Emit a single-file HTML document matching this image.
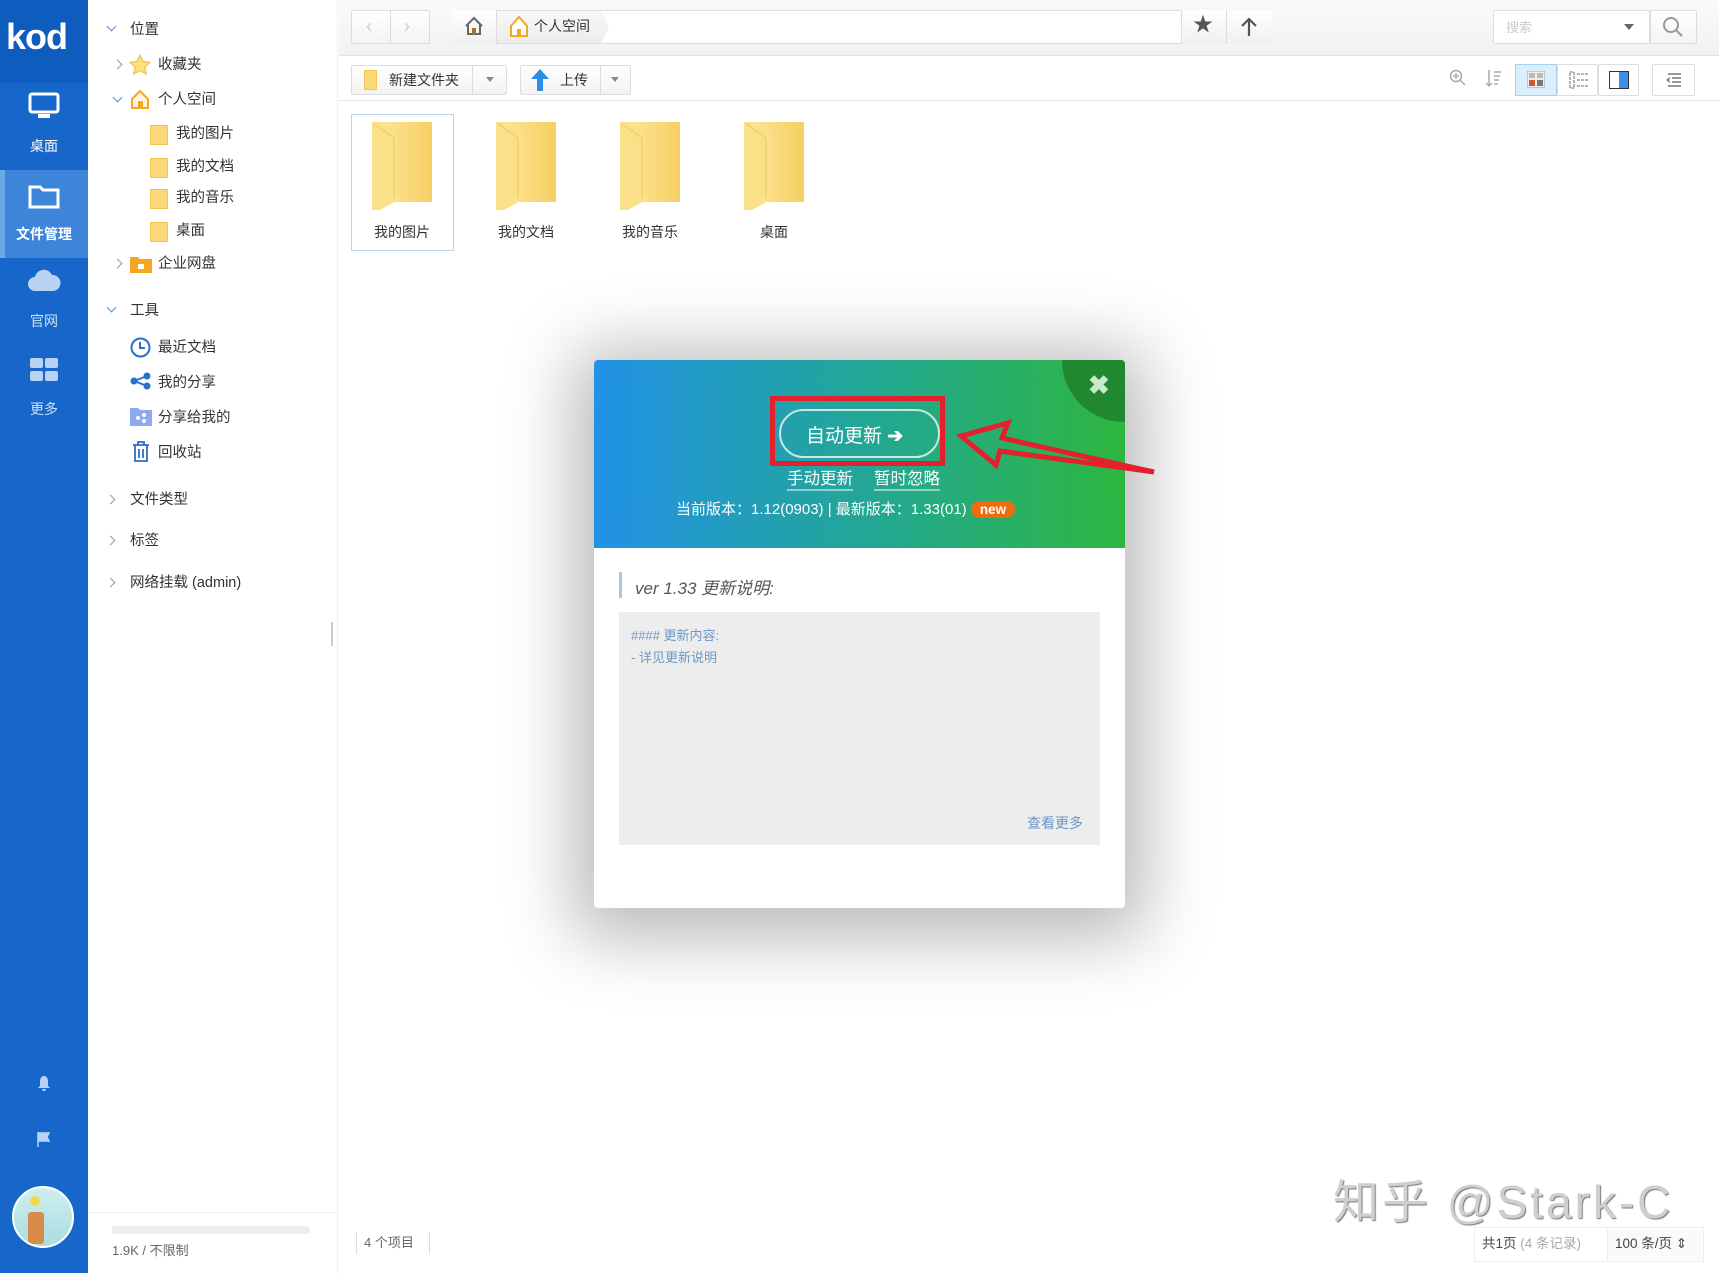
<!DOCTYPE html>
<html><head><meta charset="utf-8"><style>
*{margin:0;padding:0;box-sizing:border-box}
body{width:1719px;height:1273px;position:relative;overflow:hidden;background:#fff;font-family:"Liberation Sans","Noto Sans CJK SC",sans-serif;color:#333}
.a{position:absolute}
.side{left:0;top:0;width:88px;height:1273px;background:#1766c9}
.nav{left:0;width:88px;text-align:center;color:#fff;font-size:14px}
.t{position:absolute;font-size:14.5px;color:#333;white-space:nowrap;line-height:18px}
.chev{position:absolute;width:7px;height:7px;border-right:1.5px solid #999;border-bottom:1.5px solid #999}
.down{transform:rotate(45deg);border-color:#4a90d9}
.right{transform:rotate(-45deg)}
.fold{position:absolute;width:18px;height:20px;background:#fbd978;border:1px solid #f0c757}
.btn{position:absolute;border:1px solid #ddd;background:linear-gradient(#fff,#f3f3f3);border-radius:2px}
.bigf{position:absolute;width:62px;height:90px}
.lbl{position:absolute;font-size:14px;color:#333;width:100px;text-align:center}
</style></head><body>
<!-- sidebar -->
<div class="a side"></div>
<div class="a" style="left:0;top:0;width:88px;height:83px;background:#0f5cbf"></div>
<div class="a" style="left:6px;top:16px;color:#fff;font-size:36px;font-weight:bold;letter-spacing:-1px;font-family:'Liberation Sans',sans-serif">kod</div>
<div class="a" style="left:0;top:170px;width:88px;height:88px;background:#3c85d8"></div>
<div class="a" style="left:0;top:170px;width:5px;height:88px;background:#6ba6e6"></div>
<svg class="a" style="left:28px;top:92px" width="32" height="28" viewBox="0 0 32 28"><rect x="2" y="2" width="28" height="18" rx="2" fill="none" stroke="#fff" stroke-width="3"/><rect x="10" y="22" width="12" height="4" fill="#fff"/></svg>
<div class="a nav" style="top:136px">桌面</div>
<svg class="a" style="left:28px;top:183px" width="32" height="26" viewBox="0 0 32 26"><path d="M2 4h10l3 3h15v17H2z" fill="none" stroke="#fff" stroke-width="3"/></svg>
<div class="a nav" style="top:224px;font-weight:bold">文件管理</div>
<svg class="a" style="left:27px;top:268px" width="34" height="24" viewBox="0 0 34 24"><path d="M8 23a7 7 0 0 1 0-14 9 9 0 0 1 17-2 7 7 0 0 1 1 16z" fill="#b9d3f3"/></svg>
<div class="a nav" style="top:311px;color:#cfe0f7">官网</div>
<svg class="a" style="left:30px;top:358px" width="28" height="24"><rect x="0" y="0" width="13" height="10" rx="2" fill="#b9d3f3"/><rect x="15" y="0" width="13" height="10" rx="2" fill="#b9d3f3"/><rect x="0" y="13" width="13" height="10" rx="2" fill="#b9d3f3"/><rect x="15" y="13" width="13" height="10" rx="2" fill="#b9d3f3"/></svg>
<div class="a nav" style="top:399px;color:#cfe0f7">更多</div>
<svg class="a" style="left:37px;top:1075px" width="14" height="16"><path d="M7 1c-3 0-4 3-4 6v4l-2 2h12l-2-2V7c0-3-1-6-4-6zM5 14h4a2 2 0 0 1-4 0z" fill="#b9d3f3"/></svg>
<svg class="a" style="left:37px;top:1131px" width="14" height="16"><path d="M1 1v15M1 2h11l-2 4 2 4H1" fill="#b9d3f3" stroke="#b9d3f3" stroke-width="1.5"/></svg>
<div class="a" style="left:12px;top:1186px;width:62px;height:62px;border-radius:50%;background:linear-gradient(#cfeef0,#a9dde0);border:2px solid #fff;overflow:hidden"><div class="a" style="left:14px;top:24px;width:16px;height:32px;background:#d98a4a;border-radius:3px"></div><div class="a" style="left:16px;top:8px;width:10px;height:10px;border-radius:50%;background:#f5d54a"></div></div>

<!-- tree -->
<div class="a" style="left:88px;top:0;width:250px;height:1273px;background:#fff;border-right:1px solid #eee"></div>
<div class="chev down" style="left:108px;top:23px"></div><div class="t" style="left:130px;top:21px">位置</div>
<div class="chev right" style="left:114px;top:61px"></div>
<svg class="a" style="left:129px;top:54px" width="22" height="21"><path d="M11 1l3 6.5 7 .8-5.2 4.8 1.5 7L11 16.5 4.7 20l1.5-7L1 8.3l7-.8z" fill="#fde27a" stroke="#f0b838"/></svg>
<div class="t" style="left:158px;top:56px">收藏夹</div>
<div class="chev down" style="left:114px;top:94px"></div>
<svg class="a" style="left:130px;top:89px" width="20" height="20"><path d="M2 10L10 2l8 8v9H2z" fill="#fff5e0" stroke="#f5a623" stroke-width="2"/><rect x="8" y="12" width="5" height="6" fill="#f5a623"/></svg>
<div class="t" style="left:158px;top:91px">个人空间</div>
<div class="fold" style="left:150px;top:125px"></div><div class="t" style="left:176px;top:125px">我的图片</div>
<div class="fold" style="left:150px;top:158px"></div><div class="t" style="left:176px;top:158px">我的文档</div>
<div class="fold" style="left:150px;top:189px"></div><div class="t" style="left:176px;top:189px">我的音乐</div>
<div class="fold" style="left:150px;top:222px"></div><div class="t" style="left:176px;top:222px">桌面</div>
<div class="chev right" style="left:114px;top:260px"></div>
<svg class="a" style="left:130px;top:255px" width="22" height="18"><path d="M0 2h8l2 2h12v14H0z" fill="#f5a623"/><rect x="8" y="9" width="6" height="5" fill="#fff"/></svg>
<div class="t" style="left:158px;top:255px">企业网盘</div>
<div class="chev down" style="left:108px;top:304px"></div><div class="t" style="left:130px;top:302px">工具</div>
<svg class="a" style="left:130px;top:337px" width="21" height="21"><circle cx="10.5" cy="10.5" r="9" fill="none" stroke="#2a6fc9" stroke-width="2"/><path d="M10 5v6h5" fill="none" stroke="#2a6fc9" stroke-width="2"/></svg>
<div class="t" style="left:158px;top:339px">最近文档</div>
<svg class="a" style="left:130px;top:372px" width="22" height="18"><circle cx="4" cy="9" r="3.5" fill="#2a6fc9"/><circle cx="17" cy="4" r="3.5" fill="#2a6fc9"/><circle cx="17" cy="14" r="3.5" fill="#2a6fc9"/><path d="M4 9L17 4M4 9l13 5" stroke="#2a6fc9" stroke-width="2"/></svg>
<div class="t" style="left:158px;top:374px">我的分享</div>
<svg class="a" style="left:130px;top:408px" width="22" height="18"><path d="M0 0h8l2 2h12v16H0z" fill="#8ea9f0"/><circle cx="8" cy="10" r="2" fill="#fff"/><circle cx="14" cy="7" r="2" fill="#fff"/><circle cx="14" cy="13" r="2" fill="#fff"/></svg>
<div class="t" style="left:158px;top:409px">分享给我的</div>
<svg class="a" style="left:132px;top:441px" width="18" height="21"><path d="M1 4h16M6 4V1h6v3M3 4v16h12V4M7 8v9M11 8v9" fill="none" stroke="#2a6fc9" stroke-width="1.8"/></svg>
<div class="t" style="left:158px;top:444px">回收站</div>
<div class="chev right" style="left:107px;top:496px"></div><div class="t" style="left:130px;top:491px">文件类型</div>
<div class="chev right" style="left:107px;top:537px"></div><div class="t" style="left:130px;top:532px">标签</div>
<div class="chev right" style="left:107px;top:579px"></div><div class="t" style="left:130px;top:574px">网络挂载 (admin)</div>
<div class="a" style="left:331px;top:622px;width:2px;height:24px;border-left:1px solid #ccc;border-right:1px solid #ccc"></div>
<div class="a" style="left:88px;top:1212px;width:249px;height:1px;background:#f0f0f0"></div>
<div class="a" style="left:112px;top:1226px;width:198px;height:8px;background:#eee;border-radius:3px"></div>
<div class="t" style="left:112px;top:1242px;font-size:13px;color:#666">1.9K / 不限制</div>

<!-- top bar -->
<div class="a" style="left:339px;top:0;width:1380px;height:56px;background:linear-gradient(#fafafa,#f2f2f2);border-bottom:1px solid #e2e2e2"></div>
<div class="btn" style="left:351px;top:10px;width:40px;height:34px"></div>
<div class="btn" style="left:390px;top:10px;width:40px;height:34px"></div>
<div class="t" style="left:366px;top:17px;color:#ccc;font-size:18px">‹</div><div class="t" style="left:404px;top:17px;color:#ccc;font-size:18px">›</div>
<div class="btn" style="left:451px;top:10px;width:821px;height:34px;background:#fff"></div>
<div class="a" style="left:451px;top:10px;width:46px;height:34px;border-right:1px solid #ddd;background:linear-gradient(#fff,#f0f0f0)"></div>
<svg class="a" style="left:464px;top:16px" width="20" height="20"><path d="M2 10L10 2l8 8M4 8v10h12V8" fill="none" stroke="#666" stroke-width="2"/><rect x="8" y="12" width="4" height="6" fill="#b07020"/></svg>
<div class="a" style="left:497px;top:11px;width:112px;height:32px;background:linear-gradient(#f8f8f8,#ececec);clip-path:polygon(0 0,93% 0,100% 50%,93% 100%,0 100%)"></div>
<svg class="a" style="left:509px;top:15px" width="20" height="22"><path d="M2 11L10 2l8 9v10H2z" fill="#fff" stroke="#f5a623" stroke-width="2"/><rect x="8" y="14" width="4" height="7" fill="#f5a623"/></svg>
<div class="t" style="left:534px;top:17px;font-size:14px">个人空间</div>
<div class="a" style="left:1181px;top:10px;width:46px;height:34px;border-left:1px solid #ddd;background:linear-gradient(#fff,#f0f0f0)"></div>
<div class="a" style="left:1226px;top:10px;width:46px;height:34px;border-left:1px solid #ddd;background:linear-gradient(#fff,#f0f0f0)"></div>
<div class="t" style="left:1193px;top:16px;font-size:20px;color:#555">★</div>
<svg class="a" style="left:1240px;top:17px" width="18" height="20"><path d="M9 2v17M2 9l7-7 7 7" fill="none" stroke="#555" stroke-width="2.2"/></svg>
<div class="btn" style="left:1493px;top:10px;width:157px;height:34px;background:#fff"></div>
<div class="t" style="left:1506px;top:19px;font-size:13px;color:#ccc">搜索</div>
<div class="a" style="left:1624px;top:24px;border:5px solid transparent;border-top:6px solid #666"></div>
<div class="btn" style="left:1650px;top:10px;width:47px;height:34px"></div>
<svg class="a" style="left:1662px;top:16px" width="22" height="22"><circle cx="9" cy="9" r="7" fill="none" stroke="#999" stroke-width="2"/><path d="M14 14l6 6" stroke="#999" stroke-width="2"/></svg>

<!-- toolbar -->
<div class="a" style="left:339px;top:100px;width:1380px;height:1px;background:#e6e6e6"></div>
<div class="btn" style="left:351px;top:65px;width:156px;height:30px"></div>
<div class="a" style="left:472px;top:65px;width:1px;height:30px;background:#ddd"></div>
<div class="fold" style="left:364px;top:70px;width:13px;height:20px"></div>
<div class="t" style="left:389px;top:71px;font-size:14px">新建文件夹</div>
<div class="a" style="left:486px;top:77px;border:4px solid transparent;border-top:5px solid #888"></div>
<div class="btn" style="left:520px;top:65px;width:111px;height:30px"></div>
<div class="a" style="left:600px;top:65px;width:1px;height:30px;background:#ddd"></div>
<svg class="a" style="left:529px;top:68px" width="22" height="24"><path d="M11 1L2 11h6v12h6V11h6z" fill="#2b8ee6"/></svg>
<div class="t" style="left:560px;top:71px;font-size:14px">上传</div>
<div class="a" style="left:611px;top:77px;border:4px solid transparent;border-top:5px solid #888"></div>
<svg class="a" style="left:1449px;top:69px" width="18" height="18"><circle cx="7" cy="7" r="5.5" fill="none" stroke="#aaa" stroke-width="1.6"/><path d="M11 11l5 5M7 4v6M4 7h6" stroke="#aaa" stroke-width="1.5"/></svg>
<svg class="a" style="left:1486px;top:69px" width="16" height="20"><path d="M3 1v16M0 14l3 3 3-3M8 3h7M8 7h6M8 11h5M8 15h4" stroke="#aaa" stroke-width="1.5" fill="none"/></svg>
<div class="a" style="left:1515px;top:64px;width:42px;height:32px;background:#dbeefc;border:1px solid #a8d1f2"></div>
<svg class="a" style="left:1527px;top:71px" width="18" height="17"><rect x="0" y="0" width="18" height="17" fill="#eee" stroke="#999"/><rect x="2" y="9" width="6" height="6" fill="#d0543c"/><rect x="10" y="9" width="6" height="6" fill="#777"/><rect x="2" y="2" width="6" height="5" fill="#bbb"/><rect x="10" y="2" width="6" height="5" fill="#bbb"/></svg>
<div class="btn" style="left:1557px;top:64px;width:41px;height:32px;background:#fff"></div>
<div class="btn" style="left:1598px;top:64px;width:41px;height:32px;background:#fff"></div>
<svg class="a" style="left:1569px;top:71px" width="20" height="18"><path d="M1 1h4v16H1zM8 3h11M8 9h11M8 15h11" fill="none" stroke="#888" stroke-width="1.3" stroke-dasharray="3 1"/></svg>
<svg class="a" style="left:1609px;top:71px" width="20" height="18"><rect x="0.5" y="0.5" width="19" height="17" fill="#fff" stroke="#333"/><rect x="10" y="1" width="9" height="16" fill="#3b8fe0"/></svg>
<div class="btn" style="left:1652px;top:64px;width:43px;height:32px;background:#fff"></div>
<svg class="a" style="left:1666px;top:72px" width="16" height="16"><path d="M2 2h13M6 6h9M6 10h9M2 14h13M4 6L1 8l3 2" stroke="#777" stroke-width="1.4" fill="none"/></svg>

<!-- folders -->
<div class="a" style="left:351px;top:114px;width:103px;height:137px;border:1px solid #b7d6ea"></div>
<svg width="0" height="0" style="position:absolute"><defs><linearGradient id="fg" x1="0" x2="1"><stop offset="0" stop-color="#fce79a"/><stop offset="1" stop-color="#f6cf63"/></linearGradient></defs></svg>
<svg class="bigf" style="left:372px;top:120px" viewBox="0 0 62 90"><rect x="4" y="2" width="56" height="80" fill="url(#fg)"/><path d="M0 2h8l18 12v66L8 90H0z" fill="#fbe08a"/><path d="M2 4l20 14v60" stroke="#f3c659" fill="none"/></svg>
<svg class="bigf" style="left:496px;top:120px" viewBox="0 0 62 90"><rect x="4" y="2" width="56" height="80" fill="url(#fg)"/><path d="M0 2h8l18 12v66L8 90H0z" fill="#fbe08a"/><path d="M2 4l20 14v60" stroke="#f3c659" fill="none"/></svg>
<svg class="bigf" style="left:620px;top:120px" viewBox="0 0 62 90"><rect x="4" y="2" width="56" height="80" fill="url(#fg)"/><path d="M0 2h8l18 12v66L8 90H0z" fill="#fbe08a"/><path d="M2 4l20 14v60" stroke="#f3c659" fill="none"/></svg>
<svg class="bigf" style="left:744px;top:120px" viewBox="0 0 62 90"><rect x="4" y="2" width="56" height="80" fill="url(#fg)"/><path d="M0 2h8l18 12v66L8 90H0z" fill="#fbe08a"/><path d="M2 4l20 14v60" stroke="#f3c659" fill="none"/></svg>
<div class="lbl" style="left:352px;top:222px">我的图片</div>
<div class="lbl" style="left:476px;top:222px">我的文档</div>
<div class="lbl" style="left:600px;top:222px">我的音乐</div>
<div class="lbl" style="left:724px;top:222px">桌面</div>

<!-- footer -->
<div class="a" style="left:356px;top:1232px;width:74px;height:22px;border-left:1px solid #ddd;border-right:1px solid #ddd"></div>
<div class="t" style="left:364px;top:1234px;font-size:13px;color:#666">4 个项目</div>
<div class="a" style="left:1474px;top:1227px;width:230px;height:35px;border:1px solid #eee;background:#fff"></div>
<div class="t" style="left:1482px;top:1235px;font-size:13.5px;color:#444">共1页 <span style="color:#aaa">(4 条记录)</span></div>
<div class="a" style="left:1607px;top:1229px;width:95px;height:31px;border-left:1px solid #eee;background:#fafafa"></div>
<div class="t" style="left:1615px;top:1235px;font-size:13.5px;color:#444">100 条/页 ⇕</div>
<div class="a" style="left:1333px;top:1179px;font-size:46px;line-height:1;color:#cfcfcf;text-shadow:1px 1px 1px #777;white-space:nowrap;letter-spacing:3px;font-family:'Liberation Sans','Noto Sans CJK SC',sans-serif">知乎 @Stark-C</div>

<!-- modal -->
<div class="a" style="left:594px;top:360px;width:531px;height:548px;background:#fff;border-radius:4px;box-shadow:0 10px 70px 20px rgba(0,0,0,.28);overflow:hidden">
 <div class="a" style="left:0;top:0;width:531px;height:188px;background:linear-gradient(90deg,#2192e6,#23a88f 55%,#2db63f)"></div>
 <div class="a" style="left:468px;top:-62px;width:124px;height:124px;border-radius:50%;background:#22882f"></div>
 <div class="a" style="left:494px;top:10px;color:#c8eac9;font-size:26px;font-weight:bold">✖</div>
 <div class="a" style="left:185px;top:49px;width:161px;height:49px;border:2px solid rgba(255,255,255,.75);border-radius:25px"></div>
 <div class="a" style="left:212px;top:61px;color:#fff;font-size:19px;white-space:nowrap">自动更新 <b>➔</b></div>
 <div class="a" style="left:193px;top:105px;color:#fff;font-size:16.5px;border-bottom:2px solid rgba(255,255,255,.5)">手动更新</div>
 <div class="a" style="left:280px;top:105px;color:#fff;font-size:16.5px;border-bottom:2px solid rgba(255,255,255,.5)">暂时忽略</div>
 <div class="a" style="left:82px;top:138px;color:#fff;font-size:15px;white-space:nowrap">当前版本：1.12(0903) | 最新版本：1.33(01) <span style="background:#f06a0f;border-radius:11px;padding:1px 9px;font-weight:bold;font-size:13.5px">new</span></div>
 <div class="a" style="left:25px;top:212px;width:3px;height:26px;background:#a3c8ea"></div>
 <div class="a" style="left:41px;top:214px;font-size:17px;font-style:italic;color:#555">ver 1.33 更新说明:</div>
 <div class="a" style="left:25px;top:252px;width:481px;height:233px;background:#ededed"></div>
 <div class="a" style="left:37px;top:265px;font-size:13px;color:#6b98c8;line-height:22px">#### 更新内容:<br>- 详见更新说明</div>
 <div class="a" style="left:433px;top:453px;font-size:14px;color:#6b98c8">查看更多</div>
</div>
<!-- red annotations -->
<div class="a" style="left:770px;top:396px;width:175px;height:70px;border:5px solid #e3202b"></div>
<svg class="a" style="left:950px;top:415px" width="215" height="65" viewBox="0 0 215 65"><path d="M204 57L52 23 58 8 11 21 46 50 50 36z" fill="none" stroke="#e3202b" stroke-width="5" stroke-linejoin="miter"/></svg>
</body></html>
